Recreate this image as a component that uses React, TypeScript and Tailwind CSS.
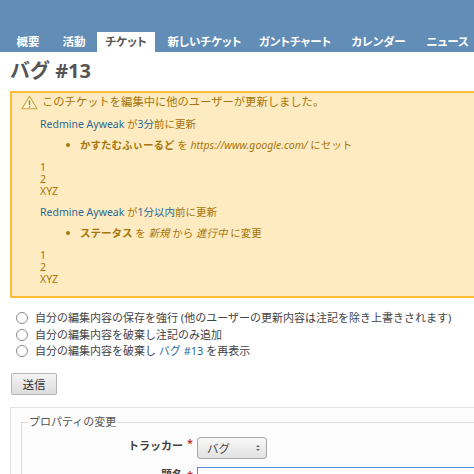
import React from "react";

const font = { fontFamily: '"Noto Sans", "Noto Sans CJK JP", sans-serif' };

const tabs = [
  { label: "概要", w: "w-[46px]" },
  { label: "活動", w: "w-[46px]" },
  { label: "チケット", w: "w-[58px]" },
  { label: "新しいチケット", w: "w-[99px]" },
  { label: "ガントチャート", w: "w-[82px]" },
  { label: "カレンダー", w: "w-[85px]" },
  { label: "ニュース", w: "w-[53px]" },
];

function WarnIcon() {
  return (
    <svg width="17" height="15" viewBox="0 0 17 15" className="shrink-0">
      <path d="M8.5 1.2 L16 13.8 H1 Z" fill="#fff6d8" stroke="#c9a23a" strokeWidth="1.1" strokeLinejoin="round" />
      <rect x="7.7" y="5.2" width="1.6" height="4.8" rx="0.6" fill="#b58710" />
      <rect x="7.7" y="11" width="1.6" height="1.6" rx="0.6" fill="#b58710" />
    </svg>
  );
}

function Radio({ children }: { children: React.ReactNode }) {
  return (
    <div className="flex items-center h-[16.5px]">
      <span className="ml-[16px] w-[12px] h-[12px] rounded-full border border-[#8a8a8a] bg-white shrink-0" />
      <span className="ml-[7px] text-[11px] text-[#444] whitespace-nowrap">{children}</span>
    </div>
  );
}

function Journal({ when, children }: { when: string; children: React.ReactNode }) {
  return (
    <>
      <div className="h-[14px] leading-[14px] text-[10.5px] whitespace-nowrap">
        <span className="text-[#2a6a93]">Redmine Ayweak</span> が<span className="text-[#2a6a93]">{when}</span>前に更新
      </div>
      <div className="mt-[7px] h-[14px] leading-[14px] text-[10.5px] whitespace-nowrap pl-[26px] flex items-center">
        <span className="w-[4px] h-[4px] rounded-full bg-[#a6750c] mr-[10px]" />
        {children}
      </div>
      <div className="mt-[9px] text-[10.5px] leading-[12px]">
        <div>1</div>
        <div>2</div>
        <div>XYZ</div>
      </div>
    </>
  );
}

export default function App() {
  return (
    <div className="w-[474px] h-[474px] overflow-hidden bg-white" style={font}>
      <div className="w-[520px]">
        <div className="h-[52px] bg-[#628db6] flex items-end">
          <div className="flex h-[20px] pl-[5px]">
            {tabs.map((t) => (
              <div
                key={t.label}
                className={
                  t.label === "チケット"
                    ? `${t.w} h-[20px] flex items-center justify-center bg-white text-[#555] text-[11.5px] font-bold whitespace-nowrap [font-feature-settings:"palt"]`
                    : `${t.w} h-[20px] flex items-center justify-center text-white text-[11.5px] font-bold whitespace-nowrap [font-feature-settings:"palt"]`
                }
              >
                {t.label}
              </div>
            ))}
          </div>
        </div>

        <div className="pl-[10px]">
          <h2 className="mt-[7px] h-[24px] leading-[24px] text-[20px] font-bold text-[#555]">バグ #13</h2>

          <div className="mt-[8px] border-2 border-[#fdbd3b] bg-[#ffebc1] text-[#a6750c] pl-[28px] pb-[11px]">
            <div className="h-[18px] flex items-center -ml-[19px] text-[11.3px] whitespace-nowrap">
              <WarnIcon />
              <span className="ml-[4px]">このチケットを編集中に他のユーザーが更新しました。</span>
            </div>
            <div className="mt-[6px]" />
            <Journal when="3分">
              <b>かすたむふぃーるど</b>&nbsp;を&nbsp;<i>https://www.google.com/</i>&nbsp;にセット
            </Journal>
            <div className="mt-[8px]" />
            <Journal when="1分以内">
              <b>ステータス</b>&nbsp;を&nbsp;<i>新規</i>&nbsp;から&nbsp;<i>進行中</i>&nbsp;に変更
            </Journal>
          </div>
        </div>

        <div className="mt-[12px]">
          <Radio>自分の編集内容の保存を強行 (他のユーザーの更新内容は注記を除き上書きされます)</Radio>
          <Radio>自分の編集内容を破棄し注記のみ追加</Radio>
          <Radio>
            自分の編集内容を破棄し <span className="text-[#2a6a93]">バグ #13</span> を再表示
          </Radio>
        </div>

        <div className="pl-[11px] mt-[11px]">
          <button className="w-[46px] h-[22px] border border-[#b5b5b5] rounded-[2px] bg-gradient-to-b from-[#f4f4f4] to-[#dcdcdc] text-[11.5px] text-[#333]">
            送信
          </button>
        </div>

        <div className="ml-[10px] mt-[12px] border border-[#e2e2e2] bg-[#fcfcfc] h-[120px] pl-[10px] pt-[7px]">
          <fieldset className="border border-[#dedede] h-[120px] pl-[6px]">
            <legend className="px-[1px] text-[11px] text-[#555] leading-[14px]">プロパティの変更</legend>
            <div className="mt-[8px] flex items-center h-[22px]">
              <div className="w-[155px] -mt-[4px] text-right text-[11px] font-bold text-[#444] whitespace-nowrap">トラッカー</div>
              <span className="ml-[4px] text-[#bb0000] text-[11px] -mt-[9px]">*</span>
              <div className="ml-[4px] w-[70px] h-[22px] border border-[#a8a8a8] rounded-[3px] bg-gradient-to-b from-[#f8f8f8] to-[#e2e2e2] flex items-center justify-between pl-[9px] pr-[5px]">
                <span className="text-[11.5px] text-[#444]">バグ</span>
                <svg width="6" height="10" viewBox="0 0 6 10">
                  <path d="M1 4 L3 2 L5 4 Z" fill="#666" />
                  <path d="M1 6 L3 8 L5 6 Z" fill="#666" />
                </svg>
              </div>
            </div>
            <div className="mt-[8px] flex items-start">
              <div className="w-[155px] text-right text-[11px] font-bold text-[#444] whitespace-nowrap">題名</div>
              <span className="ml-[4px] text-[#bb0000] text-[11px]">*</span>
              <div className="ml-[4px] w-[300px] h-[22px] border border-[#5b8bd0] bg-white" />
            </div>
          </fieldset>
        </div>
      </div>
    </div>
  );
}
